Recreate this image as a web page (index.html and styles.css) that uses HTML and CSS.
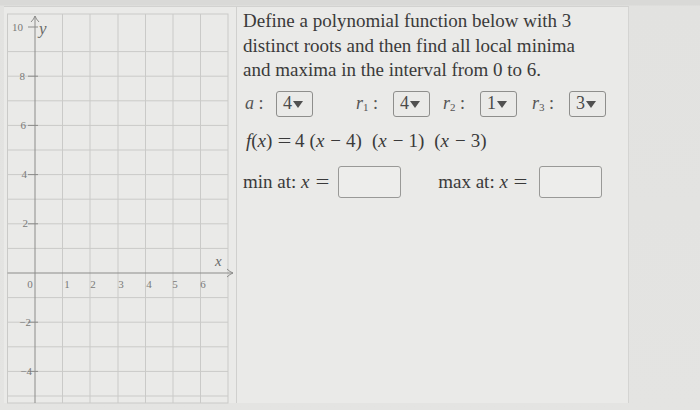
FILE: index.html
```html
<!DOCTYPE html>
<html>
<head>
<meta charset="utf-8">
<link rel="stylesheet" href="styles.css">
</head>
<body>
<div class="screen">
  <div class="panel">
    <div class="graph">
      <svg width="231" height="397" viewBox="0 0 231 397">
        <g class="grid">
          <rect x="3.5" y="7" width="220.5" height="389" fill="none"/>
          <line x1="58.5" y1="7" x2="58.5" y2="396"/>
          <line x1="86" y1="7" x2="86" y2="396"/>
          <line x1="114" y1="7" x2="114" y2="396"/>
          <line x1="141.5" y1="7" x2="141.5" y2="396"/>
          <line x1="169" y1="7" x2="169" y2="396"/>
          <line x1="196.5" y1="7" x2="196.5" y2="396"/>
          <line x1="3.5" y1="44.6" x2="224" y2="44.6"/>
          <line x1="3.5" y1="69.2" x2="224" y2="69.2"/>
          <line x1="3.5" y1="93.8" x2="224" y2="93.8"/>
          <line x1="3.5" y1="118.4" x2="224" y2="118.4"/>
          <line x1="3.5" y1="143" x2="224" y2="143"/>
          <line x1="3.5" y1="167.6" x2="224" y2="167.6"/>
          <line x1="3.5" y1="192.2" x2="224" y2="192.2"/>
          <line x1="3.5" y1="216.8" x2="224" y2="216.8"/>
          <line x1="3.5" y1="241.4" x2="224" y2="241.4"/>
          <line x1="3.5" y1="290.6" x2="224" y2="290.6"/>
          <line x1="3.5" y1="315.2" x2="224" y2="315.2"/>
          <line x1="3.5" y1="339.8" x2="224" y2="339.8"/>
          <line x1="3.5" y1="364.4" x2="224" y2="364.4"/>
          <line x1="3.5" y1="389" x2="224" y2="389"/>
        </g>
        <g class="axis">
          <line x1="31" y1="396" x2="31" y2="9"/>
          <path d="M27 15 Q30 12 31 9 Q32 12 35 15"/>
          <line x1="3.5" y1="266" x2="229" y2="266"/>
          <path d="M223 262 Q226 265 229 266 Q226 267 223 270"/>
          <line x1="24" y1="20" x2="34" y2="20"/>
          <line x1="24" y1="69.2" x2="34" y2="69.2"/>
          <line x1="24" y1="118.4" x2="34" y2="118.4"/>
          <line x1="24" y1="167.6" x2="34" y2="167.6"/>
          <line x1="24" y1="216.8" x2="34" y2="216.8"/>
          <line x1="24" y1="315.2" x2="34" y2="315.2"/>
          <line x1="24" y1="364.4" x2="34" y2="364.4"/>
        </g>
        <g class="ticklabel ylabels">
          <text x="19" y="24">10</text>
          <text x="21" y="73">8</text>
          <text x="22" y="122">6</text>
          <text x="23" y="171">4</text>
          <text x="24" y="220">2</text>
          <text x="27" y="319">−2</text>
          <text x="28" y="368">−4</text>
        </g>
        <g class="ticklabel xlabels">
          <text x="26" y="281">0</text>
          <text x="63" y="281">1</text>
          <text x="89" y="281">2</text>
          <text x="117" y="281">3</text>
          <text x="145" y="281">4</text>
          <text x="171" y="281">5</text>
          <text x="199" y="281">6</text>
        </g>
        <text class="axisname" x="211" y="259">x</text>
        <text class="axisname yname" x="35" y="27">y</text>
      </svg>
    </div>
    <div class="question">
      <p class="prompt">Define a polynomial function below with 3<br>distinct roots and then find all local minima<br>and maxima in the interval from 0 to 6.</p>
      <div class="roots">
        <div class="field f-a"><span class="var var-a"><i>a</i> :</span><span class="select">4<span class="caret"></span></span></div>
        <div class="field f-r1"><span class="var"><i>r</i><sub>1</sub> :</span><span class="select">4<span class="caret"></span></span></div>
        <div class="field f-r2"><span class="var"><i>r</i><sub>2</sub> :</span><span class="select">1<span class="caret"></span></span></div>
        <div class="field f-r3"><span class="var"><i>r</i><sub>3</sub> :</span><span class="select">3<span class="caret"></span></span></div>
      </div>
      <div class="formula"><i>f</i>(<i>x</i>)<span class="eq">=</span>4<span class="grp first">(<i>x</i><span class="op">−</span>4)</span><span class="grp">(<i>x</i><span class="op">−</span>1)</span><span class="grp">(<i>x</i><span class="op">−</span>3)</span></div>
      <div class="answers">
        <span class="ans-label">min at: <i>x</i><span class="eq">=</span></span><span class="input"></span>
        <span class="ans-label ans-max">max at: <i>x</i><span class="eq">=</span></span><span class="input"></span>
      </div>
    </div>
  </div>
</div>
</body>
</html>
```
FILE: styles.css
```css
html, body {
  margin: 0;
  padding: 0;
}
body {
  width: 700px;
  height: 410px;
  overflow: hidden;
  background: linear-gradient(180deg, #d9d9d7 0, #d9d9d7 5px, #e2e2e0 6px, #e4e4e2 100%);
  font-family: "Liberation Serif", "Times New Roman", serif;
  color: #3a3a3a;
}
.screen {
  padding: 6px 0 0 4px;
}
.panel {
  display: flex;
  width: 625px;
  height: 397px;
  background: #eaeae8;
  border-top: 1px solid #d2d2d0;
  box-sizing: border-box;
}
.graph {
  width: 231px;
  flex: none;
}
.graph svg {
  display: block;
}
.grid line, .grid rect {
  stroke: #cacac8;
  stroke-width: 1;
}
.axis line, .axis path {
  stroke: #8c8c8a;
  stroke-width: 1;
  fill: none;
}
.ticklabel text {
  font-family: "Liberation Serif", serif;
  font-size: 11px;
  fill: #7a7a78;
}
.ylabels text {
  text-anchor: end;
}
.xlabels text {
  text-anchor: middle;
}
.axisname {
  font-family: "Liberation Serif", serif;
  font-style: italic;
  font-size: 15px;
  fill: #6a6a68;
}
.yname {
  font-size: 17px;
}
.question {
  flex: 1;
  border-left: 1px solid #d0d0ce;
  border-right: 1px solid #d4d4d2;
  margin-left: 1px;
  padding: 2px 0 0 6px;
}
.prompt {
  margin: 0;
  font-size: 19px;
  line-height: 24.5px;
  white-space: nowrap;
}
.roots {
  display: flex;
  align-items: center;
  height: 26px;
  margin-top: 8px;
  font-size: 18px;
}
.field {
  display: flex;
  align-items: center;
}
.var {
  width: 37px;
  color: #555;
  white-space: nowrap;
}
.var-a {
  width: 31px;
}
.var sub {
  font-size: 11px;
  vertical-align: -2px;
  line-height: 0;
}
.f-a { margin-left: 2px; }
.f-r1 { margin-left: 43px; }
.f-r2 { margin-left: 13px; }
.f-r3 { margin-left: 15px; }
.select {
  display: flex;
  align-items: center;
  width: 37px;
  height: 26px;
  box-sizing: border-box;
  padding-left: 6px;
  border: 1.5px solid #8e8e8c;
  border-radius: 3px;
  font-size: 18px;
  color: #4a4a4a;
}
.caret {
  width: 0;
  height: 0;
  margin-left: 1px;
  margin-top: 2px;
  border-left: 5.5px solid transparent;
  border-right: 5.5px solid transparent;
  border-top: 7px solid #505050;
}
.formula {
  margin-top: 12px;
  padding-left: 3px;
  height: 24px;
  line-height: 24px;
  font-size: 19px;
  white-space: nowrap;
}
.eq {
  display: inline-block;
  margin: 0 5px 0 7px;
  transform: scaleX(1.3);
}
.op {
  display: inline-block;
  margin: 0 5px 0 6px;
}
.grp {
  margin-left: 10px;
}
.grp.first {
  margin-left: 5px;
}
.answers {
  display: flex;
  align-items: center;
  margin-top: 13px;
  height: 32px;
  font-size: 19px;
  white-space: nowrap;
}
.ans-label {
  margin-right: 6px;
}
.ans-max {
  margin-left: 37px;
  margin-right: 8px;
}
.input {
  width: 63px;
  height: 32px;
  box-sizing: border-box;
  border: 1px solid #999997;
  border-radius: 3px;
  background: #ededeb;
}
```
